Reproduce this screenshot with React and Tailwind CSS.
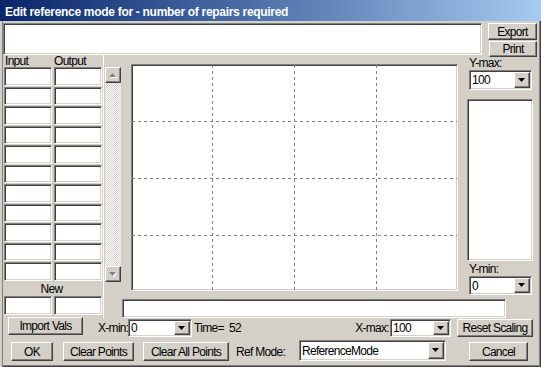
import React from 'react'

const sunken =
  'bg-white border border-t-[#808080] border-l-[#808080] border-b-white border-r-white shadow-[inset_1px_1px_0_#404040,inset_-1px_-1px_0_#d4d0c8]'
const raised =
  'bg-[#d4d0c8] border border-t-white border-l-white border-b-[#404040] border-r-[#404040] shadow-[inset_-1px_-1px_0_#808080]'

function Btn({ className = '', children }) {
  return (
    <div className={`${raised} flex items-center justify-center leading-[12px] whitespace-nowrap ${className}`}>
      {children}
    </div>
  )
}

function DownArrow({ disabled }) {
  return (
    <svg width="8" height="5" viewBox="0 0 8 5">
      {disabled && <polygon points="1,1 8,1 4.5,5" fill="#ffffff" />}
      <polygon points="0,0 7,0 3.5,4" fill={disabled ? '#808080' : '#000000'} />
    </svg>
  )
}

function UpArrow() {
  return (
    <svg width="8" height="5" viewBox="0 0 8 5">
      <polygon points="1,5 8,5 4.5,1" fill="#ffffff" />
      <polygon points="0,4 7,4 3.5,0" fill="#808080" />
    </svg>
  )
}

function Combo({ value, className = '' }) {
  return (
    <div className={`${sunken} flex p-[1px] ${className}`}>
      <div className="flex-1 pl-[1px] flex items-center leading-[12px] whitespace-nowrap">{value}</div>
      <div className={`${raised} w-[16px] flex items-center justify-center`}>
        <DownArrow />
      </div>
    </div>
  )
}

function Cell() {
  return <div className={`${sunken} w-[48px] h-full`} />
}

export default function App() {
  const rows = Array.from({ length: 11 })

  return (
    <div className="w-[541px] h-[367px] bg-[#d4d0c8] overflow-hidden flex flex-col text-black text-[12px] leading-[12px] tracking-[-0.7px] font-['Liberation_Sans',Arial,sans-serif] shadow-[inset_2px_0_0_#d4d0c8,inset_3px_0_0_#808080,inset_-1px_-1px_0_#404040,inset_-2px_-2px_0_#808080]">
      {/* title bar */}
      <div className="h-[21px] shrink-0 bg-linear-to-r from-[#0a246a] to-[#a6caf0] pl-[5px] pt-[6px] text-white font-bold text-[12px] leading-[12px] tracking-[-0.3px] whitespace-nowrap">
        Edit reference mode for - number of repairs required
      </div>

      {/* description + export / print */}
      <div className="h-[34px] shrink-0 flex items-start">
        <div className={`${sunken} ml-[3px] mt-[2px] w-[479px] h-[32px]`} />
        <div className="ml-[6px] mt-[2px] flex flex-col">
          <Btn className="w-[49px] h-[17px]">Export</Btn>
          <Btn className="ml-[1px] mt-[1px] w-[48px] h-[16px]">Print</Btn>
        </div>
      </div>

      {/* main area */}
      <div className="h-[263px] shrink-0 flex">
        {/* input / output table */}
        <div className="w-[103px] shrink-0 flex flex-col pl-[4px]">
          <div className="h-[12px] flex">
            <span className="w-[50px] pl-[1px]">Input</span>
            <span>Output</span>
          </div>
          <div className="flex flex-col gap-[1px]">
            {rows.map((_, i) => (
              <div key={i} className="h-[18.5px] flex gap-[2px]">
                <Cell />
                <Cell />
              </div>
            ))}
          </div>
          <div className="h-[15.5px] flex items-end justify-center pr-[4px] pb-[1px]">New</div>
          <div className="h-[19px] flex gap-[2px]">
            <Cell />
            <Cell />
          </div>
        </div>

        {/* graph panel */}
        <div className="flex-1 flex flex-col border-l border-white">
          <div className="h-[241px] flex items-start">
            {/* scrollbar */}
            <div className="ml-[1px] mt-[12px] w-[16px] h-[215px] flex flex-col">
              <div className={`${raised} h-[16px] flex items-center justify-center`}>
                <UpArrow />
              </div>
              <div className="flex-1 bg-[image:repeating-conic-gradient(#ffffff_0%_25%,#d4d0c8_0%_50%)] bg-[length:2px_2px]" />
              <div className={`${raised} h-[16px] flex items-center justify-center`}>
                <DownArrow disabled />
              </div>
            </div>

            {/* chart */}
            <div className={`${sunken} ml-[10px] mt-[9px] w-[327px] h-[227px]`}>
              <svg width="325" height="225" className="block">
                {[80.5, 162.5, 244.5].map(x => (
                  <line key={x} x1={x} y1="0" x2={x} y2="225" stroke="#808080" strokeDasharray="3 3" />
                ))}
                {[56.5, 113.5, 170.5].map(y => (
                  <line key={y} x1="0" y1={y} x2="325" y2={y} stroke="#808080" strokeDasharray="3 3" />
                ))}
              </svg>
            </div>

            {/* y scaling */}
            <div className="ml-[9px] w-[66px] flex flex-col">
              <div className="mt-[2px] h-[12px] pl-[2px]">Y-max:</div>
              <Combo value="100" className="mt-[1px] ml-[2px] w-[63px] h-[20px]" />
              <div className={`${sunken} mt-[9px] w-[66px] h-[162px]`} />
              <div className="mt-[2px] h-[12px] pl-[2px]">Y-min:</div>
              <Combo value="0" className="mt-[1px] ml-[2px] w-[63px] h-[19px]" />
            </div>
          </div>
          <div className={`${sunken} ml-[18px] mt-[3px] w-[384px] h-[19px]`} />
        </div>
      </div>

      {/* x scaling row */}
      <div className="h-[22px] shrink-0 flex items-start whitespace-nowrap">
        <Btn className="ml-[8px] -mt-[1px] w-[75px] h-[18px]">Import Vals</Btn>
        <div className="ml-[15px] mt-[3.5px] w-[30px]">X-min:</div>
        <Combo value="0" className="mt-[1px] w-[64px] h-[18px]" />
        <div className="ml-[2px] mt-[3.5px] whitespace-pre">Time=  52</div>
        <div className="ml-auto mt-[3.5px]">X-max:</div>
        <Combo value="100" className="ml-[1px] mt-[1px] w-[61px] h-[18px]" />
        <Btn className="ml-[6px] mr-[8px] mt-[1px] w-[76px] h-[18px]">Reset Scaling</Btn>
      </div>

      {/* bottom buttons */}
      <div className="flex-1 flex items-start whitespace-nowrap">
        <Btn className="ml-[11px] mt-[2px] w-[42px] h-[19px]">OK</Btn>
        <Btn className="ml-[10px] mt-[2px] w-[71px] h-[19px]">Clear Points</Btn>
        <Btn className="ml-[9px] mt-[2px] w-[86px] h-[19px]">Clear All Points</Btn>
        <div className="ml-[7px] mt-[5.5px] w-[63px]">Ref Mode:</div>
        <Combo value="ReferenceMode" className="w-[147px] h-[21px]" />
        <Btn className="ml-auto mr-[13px] mt-[2px] w-[59px] h-[19px]">Cancel</Btn>
      </div>
    </div>
  )
}
